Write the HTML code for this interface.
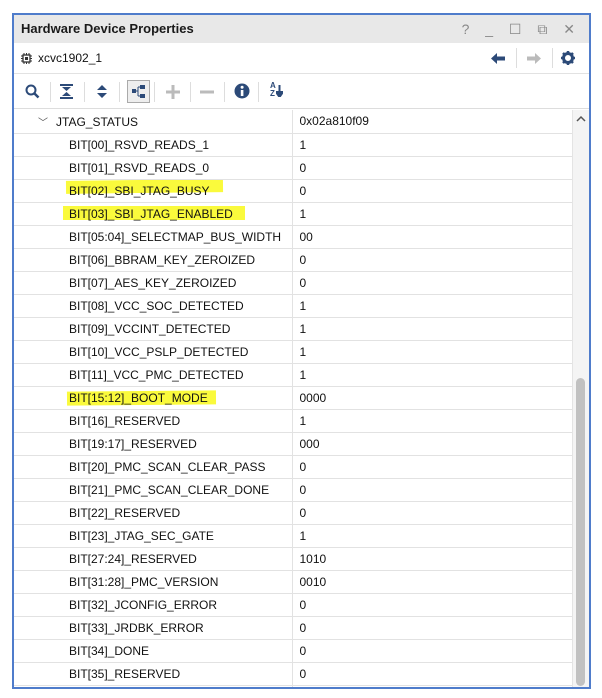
<!DOCTYPE html>
<html><head><style>
*{margin:0;padding:0;box-sizing:border-box}
body{width:602px;height:698px;background:#fff;font-family:"Liberation Sans",Arial,sans-serif;font-size:12px;color:#111;position:relative;overflow:hidden}
.panel{position:absolute;left:12px;top:13px;width:579px;height:676px;border:2px solid #4f7ccb;background:#fff;overflow:hidden}
.title{height:28px;background:#e8e8e8;font-weight:bold;font-size:13px;line-height:28px;padding-left:7px;color:#1a1a1a;position:relative}
.title .ctl{position:absolute;right:8px;top:0;color:#888;font-weight:normal;font-size:14px;letter-spacing:6px}
.row2{height:31px;border-bottom:1px solid #e2e2e2;position:relative;line-height:31px;padding-left:24px}
.tb{height:35px;border-bottom:1px solid #ddd;position:relative}
.sep{position:absolute;top:8px;width:1px;height:20px;background:#ddd}
table{position:absolute;left:0;top:95px;width:560px;border-collapse:collapse}
td{height:23px;border-bottom:1px solid #e2e2e2;padding:0;white-space:nowrap;vertical-align:middle}
td.k{width:278px;border-right:1px solid #e2e2e2;padding-left:55px}
td.v{padding-left:7px}
.hl{position:absolute;background:#fafa3c}
.sb{position:absolute;left:558px;top:95px;width:17px;height:581px;background:#f4f4f4;border-left:1px solid #e4e4e4}
.thumb{position:absolute;left:3px;top:268px;width:9px;height:308px;background:#c1c1c1;border-radius:5px}
</style></head><body>
<div class="panel">
<div class="title">Hardware Device Properties<span class="ctl">? _ ☐ ⧉ ✕</span></div>
<div class="row2">
<svg style="position:absolute;left:7px;top:10px" width="11" height="11" viewBox="0 0 11 11"><rect x="2" y="2" width="7" height="7" fill="none" stroke="#333" stroke-width="1.3"/><rect x="4" y="4" width="3" height="3" fill="#333"/><path d="M3 0v2M5.5 0v2M8 0v2M3 9v2M5.5 9v2M8 9v2M0 3h2M0 5.5h2M0 8h2M9 3h2M9 5.5h2M9 8h2" stroke="#333"/></svg>
xcvc1902_1
<svg style="position:absolute;left:477px;top:10px" width="14" height="11"><path d="M0 5.5L6 0v3.5h8v4H6V11z" fill="#2c4a78"/></svg>
<div class="sep" style="left:502px;top:5px"></div>
<svg style="position:absolute;left:513px;top:10px" width="14" height="11"><path d="M14 5.5L8 0v3.5H0v4h8V11z" fill="#bbb"/></svg>
<div class="sep" style="left:538px;top:5px"></div>
<svg style="position:absolute;left:547px;top:8px" width="14" height="14" viewBox="0 0 14 14"><circle cx="7" cy="7" r="4.5" fill="none" stroke="#2c4a78" stroke-width="3"/><path d="M7 0v3M7 11v3M0 7h3M11 7h3M2 2l2 2M10 10l2 2M2 12l2-2M10 4l2-2" stroke="#2c4a78" stroke-width="2.5"/></svg>
</div>
<div class="tb">
<svg style="position:absolute;left:11px;top:10px" width="15" height="15"><circle cx="6" cy="6" r="4.5" fill="none" stroke="#2c4a78" stroke-width="2"/><path d="M9 9l4.5 4.5" stroke="#2c4a78" stroke-width="2.5"/></svg>
<div class="sep" style="left:36px"></div>
<svg style="position:absolute;left:46px;top:10px" width="13" height="15"><path d="M0 1h13M0 14h13" stroke="#2c4a78" stroke-width="2"/><path d="M2 3h9l-4.5 4zM2 12h9l-4.5-4z" fill="#2c4a78"/></svg>
<div class="sep" style="left:70px"></div>
<svg style="position:absolute;left:82px;top:10px" width="12" height="15"><path d="M1 6h10L6 1zM1 9h10l-5 5z" fill="#2c4a78"/></svg>
<div class="sep" style="left:105px"></div>
<div style="position:absolute;left:113px;top:6px;width:23px;height:23px;border:1px solid #aaa;background:#eee"></div>
<svg style="position:absolute;left:118px;top:11px" width="13" height="13"><rect x="0" y="4" width="4" height="4" fill="#2c4a78"/><rect x="8" y="0" width="5" height="4" fill="#2c4a78"/><rect x="8" y="9" width="5" height="4" fill="#2c4a78"/><path d="M4 6h2M6 2v9M6 2h2M6 11h2" stroke="#2c4a78"/></svg>
<div class="sep" style="left:140px"></div>
<svg style="position:absolute;left:152px;top:11px" width="14" height="14"><path d="M7 0v14M0 7h14" stroke="#bbb" stroke-width="3"/></svg>
<div class="sep" style="left:176px"></div>
<svg style="position:absolute;left:186px;top:11px" width="14" height="14"><path d="M0 7h14" stroke="#bbb" stroke-width="3"/></svg>
<div class="sep" style="left:210px"></div>
<svg style="position:absolute;left:220px;top:9px" width="16" height="16"><circle cx="8" cy="8" r="7.5" fill="#2c4a78"/><rect x="6.8" y="7" width="2.6" height="6" fill="#fff"/><circle cx="8.1" cy="4.3" r="1.5" fill="#fff"/></svg>
<div class="sep" style="left:244px"></div>
<div style="position:absolute;left:256px;top:8px;font-size:8px;line-height:8px;font-weight:bold;color:#2c4a78">A<br>Z</div>
<svg style="position:absolute;left:262px;top:11px" width="7" height="12"><path d="M3.5 0v8M0 7l3.5 5 3.5-5z" stroke="#2c4a78" stroke-width="2" fill="#2c4a78"/></svg>
</div>
<div class="hl" style="left:52px;top:165px;width:157px;height:13px;transform:rotate(-0.6deg)"></div>
<div class="hl" style="left:49px;top:191px;width:182px;height:14px"></div>
<div class="hl" style="left:53px;top:376px;width:149px;height:14px;transform:rotate(-0.5deg)"></div>
<table>
<tr><td class="k" style="padding-left:24px"><span style="color:#555;font-size:10px;margin-right:8px">﹀</span>JTAG_STATUS</td><td class="v">0x02a810f09</td></tr>
<tr><td class="k">BIT[00]_RSVD_READS_1</td><td class="v">1</td></tr>
<tr><td class="k">BIT[01]_RSVD_READS_0</td><td class="v">0</td></tr>
<tr><td class="k">BIT[02]_SBI_JTAG_BUSY</td><td class="v">0</td></tr>
<tr><td class="k">BIT[03]_SBI_JTAG_ENABLED</td><td class="v">1</td></tr>
<tr><td class="k">BIT[05:04]_SELECTMAP_BUS_WIDTH</td><td class="v">00</td></tr>
<tr><td class="k">BIT[06]_BBRAM_KEY_ZEROIZED</td><td class="v">0</td></tr>
<tr><td class="k">BIT[07]_AES_KEY_ZEROIZED</td><td class="v">0</td></tr>
<tr><td class="k">BIT[08]_VCC_SOC_DETECTED</td><td class="v">1</td></tr>
<tr><td class="k">BIT[09]_VCCINT_DETECTED</td><td class="v">1</td></tr>
<tr><td class="k">BIT[10]_VCC_PSLP_DETECTED</td><td class="v">1</td></tr>
<tr><td class="k">BIT[11]_VCC_PMC_DETECTED</td><td class="v">1</td></tr>
<tr><td class="k">BIT[15:12]_BOOT_MODE</td><td class="v">0000</td></tr>
<tr><td class="k">BIT[16]_RESERVED</td><td class="v">1</td></tr>
<tr><td class="k">BIT[19:17]_RESERVED</td><td class="v">000</td></tr>
<tr><td class="k">BIT[20]_PMC_SCAN_CLEAR_PASS</td><td class="v">0</td></tr>
<tr><td class="k">BIT[21]_PMC_SCAN_CLEAR_DONE</td><td class="v">0</td></tr>
<tr><td class="k">BIT[22]_RESERVED</td><td class="v">0</td></tr>
<tr><td class="k">BIT[23]_JTAG_SEC_GATE</td><td class="v">1</td></tr>
<tr><td class="k">BIT[27:24]_RESERVED</td><td class="v">1010</td></tr>
<tr><td class="k">BIT[31:28]_PMC_VERSION</td><td class="v">0010</td></tr>
<tr><td class="k">BIT[32]_JCONFIG_ERROR</td><td class="v">0</td></tr>
<tr><td class="k">BIT[33]_JRDBK_ERROR</td><td class="v">0</td></tr>
<tr><td class="k">BIT[34]_DONE</td><td class="v">0</td></tr>
<tr><td class="k">BIT[35]_RESERVED</td><td class="v">0</td></tr>
<tr><td class="k"></td><td class="v"></td></tr>
</table>
<div class="sb"><svg style="position:absolute;left:3px;top:5px" width="10" height="7"><path d="M1 6l4-4 4 4" stroke="#555" stroke-width="1.5" fill="none"/></svg><div class="thumb"></div></div>
</div>
</body></html>
